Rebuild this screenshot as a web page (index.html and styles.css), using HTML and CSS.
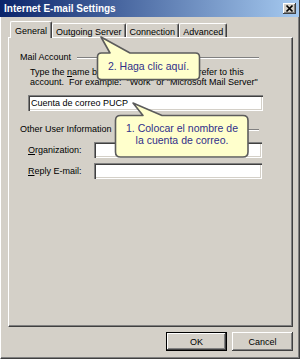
FILE: index.html
```html
<!DOCTYPE html>
<html>
<head>
<meta charset="utf-8">
<link rel="stylesheet" href="styles.css">
</head>
<body>
<div class="window">
  <div class="titlebar">
    <span class="title">Internet E-mail Settings</span>
    <span class="close"><svg width="13" height="11" viewBox="0 0 13 11"><path d="M3.5 2.5 L9.5 8.5 M9.5 2.5 L3.5 8.5" stroke="#000" stroke-width="1.7" fill="none"/></svg></span>
  </div>
  <div class="tabs">
    <div class="tab active">General</div>
    <div class="tab">Outgoing Server</div>
    <div class="tab">Connection</div>
    <div class="tab">Advanced</div>
  </div>
  <div class="panel">
    <div class="group-head"><span>Mail Account</span><span class="rule"></span></div>
    <p class="desc">Type the <u>n</u>ame by which you would like to refer to this<br>account.&nbsp; For example:&nbsp; "Work" or "Microsoft Mail Server"</p>
    <div class="field wide">Cuenta de correo PUCP</div>
    <div class="group-head second"><span>Other User Information</span><span class="rule"></span></div>
    <div class="row first"><span class="label"><u>O</u>rganization:</span><div class="field short"></div></div>
    <div class="row"><span class="label"><u>R</u>eply E-mail:</span><div class="field short"></div></div>
  </div>
  <div class="buttons">
    <button class="btn default">OK</button>
    <button class="btn">Cancel</button>
  </div>
  <svg class="callouts" width="300" height="359" viewBox="0 0 300 359">
    <path d="M101.5 53 H110 L101 37 L130 53 H195.5 Q199.5 53 199.5 57 V75.5 Q199.5 79.5 195.5 79.5 H101.5 Q97.5 79.5 97.5 75.5 V57 Q97.5 53 101.5 53 Z" fill="#ffffcc" stroke="#5c5c5c" stroke-width="1.6" stroke-linejoin="round"/>
    <path d="M120.5 115.5 H143 L133 103 L162 115.5 H243 Q248 115.5 248 120.5 V152 Q248 157 243 157 H120.5 Q115.5 157 115.5 152 V120.5 Q115.5 115.5 120.5 115.5 Z" fill="#ffffcc" stroke="#5c5c5c" stroke-width="1.6" stroke-linejoin="round"/>
  </svg>
  <div class="callout-text c2">2. Haga clic aquí.</div>
  <div class="callout-text c1">1. Colocar el nombre de<br>la cuenta de correo.</div>
</div>
</body>
</html>
```

FILE: styles.css
```css
* { box-sizing: border-box; }
html, body { margin: 0; padding: 0; }
body {
  width: 300px;
  height: 359px;
  overflow: hidden;
  font-family: "Liberation Sans", Arial, sans-serif;
  font-size: 9px;
  color: #000;
  background: #d4d0c8;
}
.window {
  position: relative;
  width: 300px;
  height: 359px;
  background: #d4d0c8;
  border-left: 1px solid #ffffff;
  border-right: 1px solid #404040;
  border-bottom: 1px solid #404040;
  box-shadow: inset -1px -1px 0 #808080;
  display: flex;
  flex-direction: column;
}
.titlebar {
  height: 17px;
  margin-left: -1px;
  background: linear-gradient(to right, #0a246a, #a6caf0);
  display: flex;
  align-items: center;
  justify-content: space-between;
  padding: 0 3px 0 4px;
}
.title {
  color: #fff;
  font-weight: bold;
  font-size: 10px;
  line-height: 17px;
  white-space: nowrap;
}
.close {
  width: 13px;
  height: 11px;
  background: #d4d0c8;
  box-shadow: inset -1px -1px 0 #404040, inset 1px 1px 0 #ffffff, inset -2px -2px 0 #808080;
  display: flex;
}
.close svg { display: block; }
.tabs {
  position: relative;
  z-index: 2;
  display: flex;
  align-items: flex-end;
  height: 17px;
  margin: 4px 0 -1px 9px;
}
.tab {
  height: 14px;
  margin-bottom: 1px;
  padding: 3px 3px 0 3px;
  line-height: 11px;
  white-space: nowrap;
  border-top: 1px solid #ffffff;
  border-left: 1px solid #ffffff;
  border-right: 1px solid #404040;
  box-shadow: inset -1px 0 0 #808080;
  border-radius: 2px 2px 0 0;
}
.tab.active {
  height: 17px;
  margin-bottom: 0;
  padding: 4px 4px 0 4px;
  background: #d4d0c8;
}
.panel {
  position: relative;
  z-index: 1;
  height: 290px;
  margin: 0 6px 0 7px;
  border-top: 1px solid #ffffff;
  border-left: 1px solid #ffffff;
  border-right: 1px solid #404040;
  border-bottom: 1px solid #404040;
  box-shadow: inset -1px -1px 0 #808080;
}
.group-head {
  display: flex;
  align-items: center;
  height: 11px;
  line-height: 11px;
  margin: 14px 33px 0 11px;
  white-space: nowrap;
}
.group-head.second { margin-top: 13px; }
.rule {
  flex: 1;
  height: 2px;
  margin-left: 6px;
  border-top: 1px solid #808080;
  border-bottom: 1px solid #ffffff;
}
.desc {
  margin: 4px 0 0 21px;
  line-height: 10px;
  white-space: nowrap;
}
.field {
  height: 16px;
  background: #fff;
  padding: 0 3px;
  line-height: 16px;
  white-space: nowrap;
  box-shadow: inset 1px 1px 0 #808080, inset 2px 2px 0 #404040, inset -1px -1px 0 #ffffff, inset -2px -2px 0 #d4d0c8;
}
.field.wide {
  width: 235px;
  margin: 8px 0 0 19px;
}
.row {
  display: flex;
  align-items: center;
  margin: 5px 0 0 19px;
}
.row.first { margin-top: 7px; }
.label {
  width: 66px;
  line-height: 16px;
  white-space: nowrap;
}
.field.short { width: 168px; }
.buttons {
  display: flex;
  justify-content: flex-end;
  gap: 5px;
  margin: 5px 6px 0 0;
}
.btn {
  width: 61px;
  height: 19px;
  padding: 0;
  font-family: "Liberation Sans", Arial, sans-serif;
  font-size: 9px;
  color: #000;
  background: #d4d0c8;
  border: none;
  box-shadow: inset -1px -1px 0 #404040, inset 1px 1px 0 #ffffff, inset -2px -2px 0 #808080;
}
.btn.default {
  border: 1px solid #000;
}
.callouts {
  position: absolute;
  left: -1px;
  top: 0;
  z-index: 5;
  pointer-events: none;
}
.callout-text {
  position: absolute;
  z-index: 6;
  font-size: 10.5px;
  color: #302f8a;
  text-align: center;
  white-space: nowrap;
}
.c2 {
  left: 96px;
  top: 53px;
  width: 103px;
  height: 27px;
  line-height: 27px;
}
.c1 {
  left: 114px;
  top: 116px;
  width: 134px;
  padding-top: 6px;
  line-height: 12px;
}
```
